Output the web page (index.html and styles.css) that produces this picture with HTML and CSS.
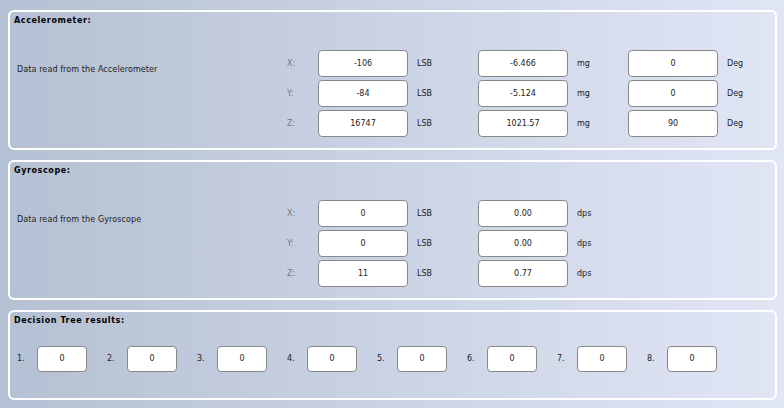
FILE: index.html
```html
<!DOCTYPE html>
<html lang="en">

<head>
    <meta charset="UTF-8">
    <title>Sensor Readings</title>
    <link rel="stylesheet" href="styles.css">
</head>

<body>
    <div class="panel">
        <h2 class="panel-title">Accelerometer:</h2>
        <div class="panel-body">
            <div class="desc">Data read from the Accelerometer</div>
            <div class="readings three">
                <div class="axis">X:</div>
                <div class="field">-106</div>
                <div class="unit">LSB</div>
                <div class="field">-6.466</div>
                <div class="unit">mg</div>
                <div class="field">0</div>
                <div class="unit">Deg</div>

                <div class="axis">Y:</div>
                <div class="field">-84</div>
                <div class="unit">LSB</div>
                <div class="field">-5.124</div>
                <div class="unit">mg</div>
                <div class="field">0</div>
                <div class="unit">Deg</div>

                <div class="axis">Z:</div>
                <div class="field">16747</div>
                <div class="unit">LSB</div>
                <div class="field">1021.57</div>
                <div class="unit">mg</div>
                <div class="field">90</div>
                <div class="unit">Deg</div>
            </div>
        </div>
    </div>

    <div class="panel">
        <h2 class="panel-title">Gyroscope:</h2>
        <div class="panel-body">
            <div class="desc">Data read from the Gyroscope</div>
            <div class="readings two">
                <div class="axis">X:</div>
                <div class="field">0</div>
                <div class="unit">LSB</div>
                <div class="field">0.00</div>
                <div class="unit">dps</div>

                <div class="axis">Y:</div>
                <div class="field">0</div>
                <div class="unit">LSB</div>
                <div class="field">0.00</div>
                <div class="unit">dps</div>

                <div class="axis">Z:</div>
                <div class="field">11</div>
                <div class="unit">LSB</div>
                <div class="field">0.77</div>
                <div class="unit">dps</div>
            </div>
        </div>
    </div>

    <div class="panel short">
        <h2 class="panel-title">Decision Tree results:</h2>
        <div class="results">
            <div class="result"><span class="result-num">1.</span><div class="field small">0</div></div>
            <div class="result"><span class="result-num">2.</span><div class="field small">0</div></div>
            <div class="result"><span class="result-num">3.</span><div class="field small">0</div></div>
            <div class="result"><span class="result-num">4.</span><div class="field small">0</div></div>
            <div class="result"><span class="result-num">5.</span><div class="field small">0</div></div>
            <div class="result"><span class="result-num">6.</span><div class="field small">0</div></div>
            <div class="result"><span class="result-num">7.</span><div class="field small">0</div></div>
            <div class="result"><span class="result-num">8.</span><div class="field small">0</div></div>
        </div>
    </div>
</body>

</html>
```

FILE: styles.css
```css
* {
    margin: 0;
    padding: 0;
    box-sizing: border-box;
    font-family: "DejaVu Sans", Verdana, sans-serif;
}

body {
    background: linear-gradient(to right, #b4c0d3, #e1e6f5);
    height: 408px;
    padding: 10px 7px 0 8px;
    font-size: 8px;
    line-height: 10px;
    color: #222;
}

.panel {
    height: 140px;
    border: 2px solid #fff;
    border-radius: 6px;
    padding: 4px 4px 2px;
    margin-bottom: 10px;
}

.panel.short {
    height: 90px;
}

.panel-title {
    font-size: 8px;
    line-height: 10px;
    font-weight: bold;
    letter-spacing: 0.6px;
    color: #000;
}

.panel-body {
    display: flex;
    margin-top: 24px;
}

.desc {
    width: 273px;
    padding-left: 3px;
    margin-top: 15px;
    letter-spacing: 0.1px;
}

.readings {
    display: grid;
    grid-auto-rows: 27px;
    row-gap: 3px;
    align-items: center;
}

.readings.three {
    grid-template-columns: 31px 90px 70px 90px 60px 90px 40px;
}

.readings.two {
    grid-template-columns: 31px 90px 70px 90px 40px;
}

.axis {
    color: #777;
}

.unit {
    padding-left: 9px;
    color: #222;
}

.field {
    height: 27px;
    background: #fff;
    border: 1px solid #888;
    border-radius: 4px;
    display: flex;
    align-items: center;
    justify-content: center;
    color: #222;
}

.results {
    display: flex;
    margin-top: 20px;
    padding-left: 3px;
}

.result {
    display: flex;
    align-items: center;
    margin-right: 20px;
}

.result-num {
    width: 20px;
}

.field.small {
    width: 50px;
    height: 26px;
}
```
